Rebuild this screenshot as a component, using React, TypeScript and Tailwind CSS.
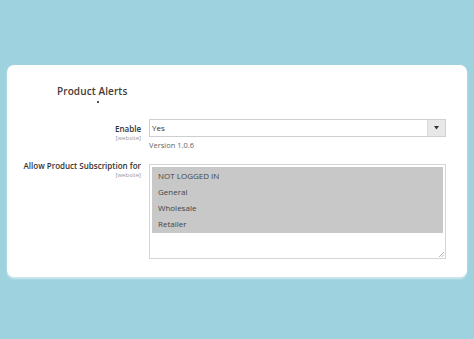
import React from "react";

export default function App() {
  const font = { fontFamily: '"Open Sans", "Noto Sans", sans-serif' };
  return (
    <div className="w-[474px] h-[339px] bg-[#9dd2de] pt-[65px] px-[7px] overflow-hidden" style={font}>
      <div className="h-[212px] bg-white rounded-[7px] shadow-[0_2px_2px_rgba(255,255,255,0.5)] flex flex-col">
        <div className="pt-[19px] pl-[50px] h-[14px] box-content text-[10px] leading-[14px] font-semibold text-[#443a34] tracking-[0.1px]">
          Product Alerts
        </div>
        <div className="h-[4px] mt-[3px] pl-[90px] flex items-start">
          <div className="w-[2px] h-[1.5px] bg-[#555]"></div>
        </div>
        <div className="mt-[14px] flex gap-[8px]">
          <div className="w-[134px] flex flex-col items-end">
            <div className="h-[18px] flex items-center text-[8px] font-semibold text-[#333] leading-none pt-[1px]">Enable</div>
            <div className="text-[6px] text-[#999] leading-none -mt-[2px]">[website]</div>
          </div>
          <div className="w-[297px] flex flex-col">
            <div className="h-[18px] border border-[#cfcfcf] flex items-stretch">
              <div className="flex-1 flex items-center pl-[2px] text-[8px] text-[#333]">Yes</div>
              <div className="w-[18px] bg-[#e8e8e8] border-l border-[#d8d8d8] flex items-center justify-center">
                <svg width="5" height="4" viewBox="0 0 5 4"><path d="M0 0 L5 0 L2.5 3.5 Z" fill="#333" /></svg>
              </div>
            </div>
            <div className="mt-[3px] text-[7.5px] text-[#666] leading-[10px]">Version 1.0.6</div>
          </div>
        </div>
        <div className="mt-[11px] flex gap-[8px]">
          <div className="w-[134px] flex flex-col items-end">
            <div className="text-[8px] font-semibold text-[#333] leading-[10px] whitespace-nowrap">Allow Product Subscription for</div>
            <div className="text-[6px] text-[#999] leading-none mt-[1px]">[website]</div>
          </div>
          <div className="mt-[3px] w-[297px] h-[95px] border border-[#d5d5d5] p-[2px] relative">
            <div className="bg-[#c8c8c8] flex flex-col pl-[6px] pt-[1px] pb-[1px]">
              {["NOT LOGGED IN", "General", "Wholesale", "Retailer"].map((t) => (
                <div key={t} className="h-[16px] flex items-center text-[8px] text-[#444]">{t}</div>
              ))}
            </div>
            <svg className="absolute right-[1px] bottom-[1px]" width="5" height="5" viewBox="0 0 5 5">
              <path d="M5 0 L0 5 M5 2.5 L2.5 5" stroke="#aaa" strokeWidth="0.8" />
            </svg>
          </div>
        </div>
      </div>
    </div>
  );
}
